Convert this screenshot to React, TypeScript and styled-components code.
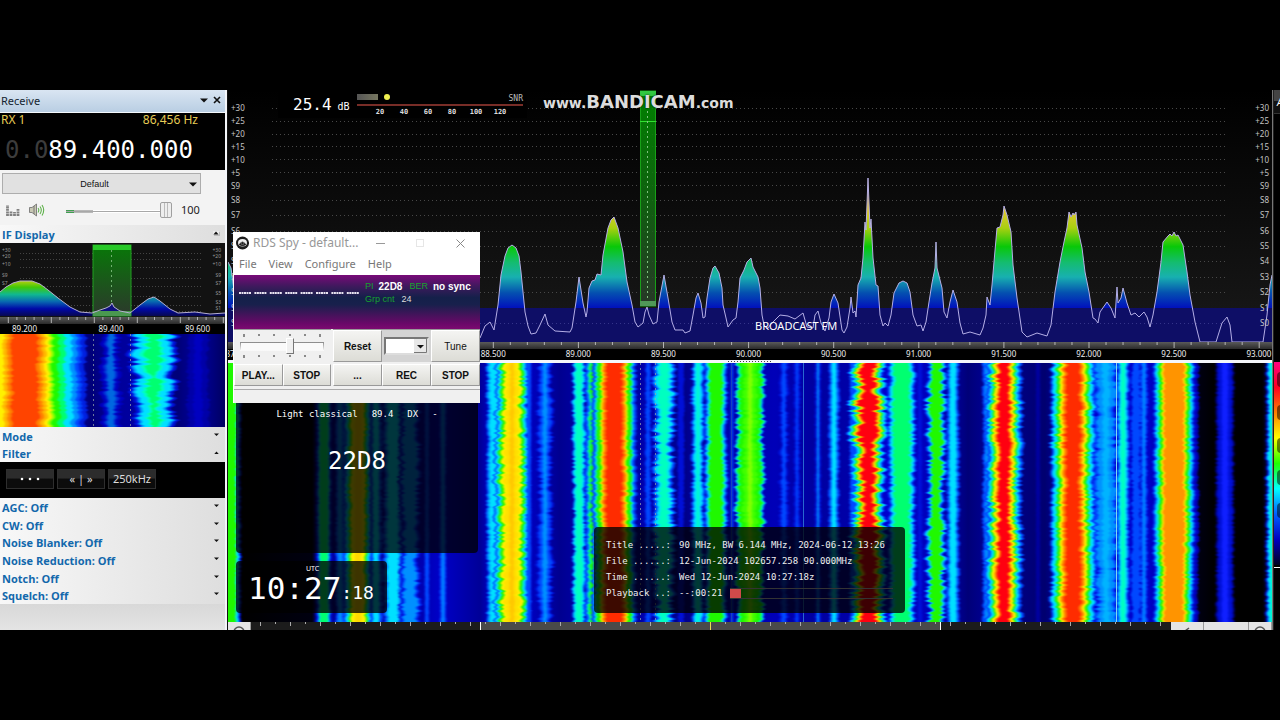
import React from "react";
import styled, { createGlobalStyle } from "styled-components";

const sans = `"Noto Sans", "Open Sans", sans-serif`;
const mono = `"DejaVu Sans Mono", "Liberation Mono", monospace`;
const arial = `"Liberation Sans", Arial, sans-serif`;

const Global = createGlobalStyle`
  * { box-sizing: border-box; }
  body { margin: 0; background: #000; font-family: ${sans}; font-size: 11px; }
  button, input, select { font: inherit; color: inherit; margin: 0; }
  svg { display: block; }
  h1, h2, p, dl, dd, dt { margin: 0; font-weight: inherit; font-size: inherit; }
`;

const Page = styled.div`
  min-height: 100vh;
  display: flex;
  flex-direction: column;
  justify-content: center;
  background: #000;
  overflow: hidden;
`;

const Workspace = styled.main`
  display: grid;
  grid-template-columns: 225px minmax(0, 1fr) 7px;
`;

/* ---------- receiver side panel ---------- */

const Sidebar = styled.aside`
  display: flex;
  flex-direction: column;
  background: linear-gradient(90deg, #f6f6f6, #dcdcdc);
`;

const PanelHeader = styled.header`
  display: flex;
  align-items: center;
  height: 23px;
  padding: 0 3px 2px 1px;
  gap: 2px;
  background: linear-gradient(#d9e5f2, #b9cee3);
  border-bottom: 1px solid #f4f8fc;
  color: #151f30;
  h1 { flex: 1; }
`;

const IconButton = styled.button`
  width: 11px;
  height: 14px;
  padding: 0;
  border: 0;
  background: none;
  display: grid;
  place-items: center;
`;

const Tuner = styled.section`
  height: 57px;
  background: #000;
  color: #e6cc55;
`;

const TunerInfo = styled.div`
  display: flex;
  justify-content: space-between;
  padding: 0 27px 0 1px;
  font-size: 12px;
  line-height: 14px;
`;

const Frequency = styled.div`
  padding-left: 5px;
  margin-top: 7px;
  font: 24px/32px ${mono};
  color: #fff;
  span { color: #3c3c3c; }
`;

const AudioBlock = styled.section`
  display: flex;
  flex-direction: column;
  height: 55px;
  padding: 3px 2px 0;
  background: #f3f3f3;
`;

const DeviceBox = styled.div`
  position: relative;
  width: 199px;
  svg { position: absolute; right: 4px; top: 9px; pointer-events: none; }
`;

const DeviceSelect = styled.select`
  display: block;
  width: 100%;
  height: 21px;
  appearance: none;
  background: #e1e1e1;
  border: 1px solid #adadad;
  padding: 0 14px 0 0;
  font: 9px ${arial};
  color: #111;
  text-align: center;
  text-align-last: center;
`;

const VolumeRow = styled.div`
  display: flex;
  align-items: center;
  gap: 9px;
  height: 36px;
  padding-left: 4px;
  svg { flex: none; }
  output { color: #222; }
`;

const VolumeSlider = styled.input`
  appearance: none;
  width: 108px;
  height: 18px;
  margin-left: 10px;
  background: linear-gradient(90deg, #3f9f50 8px, #b8b8b8 8px 27px, #fff 27px) 2px 9px / 100px 3px no-repeat;
  border: 0;
  &::-webkit-slider-runnable-track {
    height: 16px;
    background: linear-gradient(#a8a8a8, #a8a8a8) 2px 9px / 96% 1px no-repeat;
  }
  &::-webkit-slider-thumb {
    appearance: none;
    width: 12px;
    height: 16px;
    border: 1px solid #a0a0a0;
    border-radius: 2px;
    background: linear-gradient(90deg, #eee 3px, #bbb 3px 4px, #eee 4px 6px, #bbb 6px 7px, #eee 7px);
  }
`;

const SectionButton = styled.button<{ $boxed?: boolean }>`
  display: flex;
  align-items: center;
  justify-content: space-between;
  width: 100%;
  min-height: 17px;
  border: 0;
  padding: 2px 6px 0 2px;
  background: linear-gradient(90deg, #f8f8f8, #dedede);
  color: #1268ac;
  font: bold 11px/16px "Open Sans", ${sans};
  text-align: left;
  svg { background: ${(p) => (p.$boxed ? "#ececec" : "transparent")}; box-shadow: ${(p) => (p.$boxed ? "1px 1px #bbb" : "none")}; margin-bottom: 4px; }
`;

const SectionList = styled.div<{ $rows: number; $height: number }>`
  display: grid;
  grid-template-rows: repeat(${(p) => p.$rows}, minmax(0, 1fr));
  height: ${(p) => p.$height}px;
`;

const SidebarFoot = styled.div`
  flex: 1;
  background: linear-gradient(#d8d8d8, #e4e4e4);
`;

const Scope = styled.section`
  background: #000;
  svg { width: 100%; }
`;

const ScaleRow = styled.div`
  display: flex;
  justify-content: space-between;
  padding: 0 15px 0 12px;
  height: 10px;
  font-size: 8px;
  line-height: 9px;
  color: #eee;
`;

const FilterBar = styled.div`
  display: flex;
  gap: 3px;
  height: 36px;
  padding: 7px 6px;
  background: #000;
`;

const FilterButton = styled.button`
  width: 48px;
  height: 20px;
  padding: 0;
  border: 1px solid #2e2e2e;
  background: linear-gradient(#2c2c2c 45%, #0c0c0c 50%);
  color: #ddd;
  line-height: 16px;
  white-space: nowrap;
`;

/* ---------- main display ---------- */

const Display = styled.section`
  position: relative;
  min-width: 0;
  padding-left: 3px;
  border-right: 1px solid #777;
  background: linear-gradient(90deg, #f4f6fa 2px, #111 2px);
`;

const Spectrum = styled.div`
  position: relative;
  svg.plot { width: 100%; }
`;

const LevelScale = styled.div<{ $side: "left" | "right" }>`
  position: absolute;
  top: 11px;
  bottom: 11px;
  ${(p) => p.$side}: 3px;
  display: grid;
  grid-template-rows: repeat(7, 13px) repeat(9, 1fr);
  align-items: center;
  text-align: ${(p) => p.$side};
  font-size: 8px;
  line-height: 12px;
  color: #c4c4c4;
`;

const Meter = styled.div`
  position: absolute;
  top: 0;
  left: 50px;
  display: flex;
  width: 249px;
  height: 28px;
  background: #000;
  font-family: ${mono};
  color: #fff;
  p { width: 79px; padding: 5px 0 0 15px; font-size: 16px; line-height: 20px; white-space: nowrap; }
  small { font-size: 10px; }
`;

const MeterScale = styled.div`
  flex: 1;
  display: flex;
  flex-direction: column;
  svg { width: 166px; }
`;

const MeterTicks = styled.div`
  display: grid;
  grid-template-columns: repeat(6, 24px);
  padding-left: 11px;
  text-align: center;
  font: bold 7px/10px ${mono};
  color: #ddd;
`;

const SnrLabel = styled.span`
  position: absolute;
  right: 4px;
  top: 3px;
  font-size: 8px;
  line-height: 11px;
  color: #bbb;
`;

const BandLabel = styled.div`
  position: absolute;
  left: 527px;
  bottom: 9px;
  font-size: 11px;
  line-height: 14px;
  color: #fff;
`;

const Watermark = styled.div`
  position: absolute;
  left: 315px;
  top: 3px;
  font: bold 18px/18px "DejaVu Sans", sans-serif;
  color: #dcdcdc;
  text-shadow: 0 0 2px #000;
  white-space: nowrap;
  span { font-size: 14px; }
`;

const Ruler = styled.div`
  height: 7px;
  background: linear-gradient(#5a5a5a, #2a2a2a);
  overflow: hidden;
  svg { width: 100%; }
`;

const AxisLabels = styled.div`
  display: flex;
  justify-content: space-between;
  height: 11px;
  overflow: hidden;
  background: #000;
  font-size: 8px;
  line-height: 9px;
  color: #eee;
  span { width: 34px; flex: none; text-align: center; }
  span:first-child { margin-left: -7px; }
  span:last-child { margin-right: -4px; }
`;

const Splitter = styled.div`
  height: 3px;
  background: #f4f6fa;
  svg { margin: 0 auto 0 500px; }
`;

const WaterfallArea = styled.div`
  position: relative;
  svg { width: 100%; }
`;

const Overlay = styled.div`
  position: absolute;
  background: rgba(0, 0, 0, 0.76);
  border-radius: 4px;
  color: #fff;
  font-family: ${mono};
`;

const StationPanel = styled(Overlay)`
  left: 8px;
  top: 30px;
  width: 242px;
  height: 160px;
  text-align: center;
`;

const StationLine = styled.p`
  display: flex;
  justify-content: center;
  gap: 14px;
  margin-top: 15px;
  font-size: 9px;
  line-height: 13px;
`;

const StationCode = styled.p`
  margin-top: 24px;
  font-size: 24px;
  line-height: 32px;
`;

const ClockPanel = styled(Overlay)`
  left: 8px;
  bottom: 9px;
  width: 151px;
  height: 52px;
  padding-left: 12px;
  p { display: flex; align-items: baseline; font-size: 31px; line-height: 30px; }
  p small { font-size: 18px; }
  span { display: block; padding: 3px 0 0 58px; font-size: 7px; line-height: 9px; font-family: ${sans}; }
`;

const InfoPanel = styled(Overlay)`
  left: 366px;
  bottom: 9px;
  width: 311px;
  padding: 10px 12px 12px;
  dl { display: grid; grid-template-columns: 73px 1fr; font-size: 9px; line-height: 16px; white-space: nowrap; color: #eee; }
  dd { display: flex; align-items: center; gap: 8px; }
`;

const Progress = styled.div`
  flex: 1;
  height: 11px;
  border-top: 1px solid #333;
  border-bottom: 1px solid #333;
  &::before { content: ""; display: block; width: 11px; height: 9px; background: #cf4a4a; }
`;

const BottomRuler = styled.div`
  position: relative;
  display: flex;
  justify-content: space-between;
  height: 8px;
  overflow: hidden;
  background: linear-gradient(90deg, #1c1c1c 252px, #4a4a4a 252px 712px, #1c1c1c 712px);
  svg.ticks { position: absolute; inset: 0; width: 100%; }
`;

const ScrollButton = styled.button<{ $w: number }>`
  position: relative;
  width: ${(p) => p.$w}px;
  height: 14px;
  padding: 0;
  border: 0;
  border-right: 1px solid #999;
  background: #e4e4e4;
  svg { margin: 4px auto 0; }
`;

const Buttons = styled.div`
  display: flex;
`;

/* ---------- right edge ---------- */

const EdgeStrip = styled.aside`
  background: #000;
  border-left: 1px solid #222;
  overflow: hidden;
`;

const EdgeTab = styled.div`
  height: 24px;
  padding: 4px 0 0 3px;
  border-bottom: 1px solid #333;
  background: linear-gradient(#444 50%, #111 50%);
  color: #fff;
  font-size: 10px;
  font-style: italic;
  line-height: 16px;
`;

/* ---------- RDS Spy window ---------- */

const SpyWindow = styled.section`
  position: absolute;
  left: 8px;
  top: 142px;
  width: 247px;
  background: #f0f0f0;
  border-left: 1px solid #fff;
  color: #777;
  z-index: 2;
`;

const TitleBar = styled.header`
  display: flex;
  align-items: center;
  height: 22px;
  padding: 0 0 0 2px;
  background: #fff;
  color: #979797;
  h2 { width: 115px; margin-left: 4px; font-size: 12px; line-height: 20px; white-space: nowrap; }
`;

const WindowButton = styled.button`
  width: 40px;
  height: 20px;
  padding: 0;
  border: 0;
  background: none;
  display: grid;
  place-items: center;
`;

const MenuBar = styled.nav`
  display: flex;
  gap: 12px;
  height: 21px;
  padding: 0 5px 2px;
  background: #fff;
  button { border: 0; padding: 0; background: none; line-height: 16px; }
`;

const RdsPanel = styled.div`
  display: grid;
  grid-template-columns: 131px 1fr;
  height: 54px;
  background: linear-gradient(#780a78, #3c1a5c 22%, #14204a 42%, #18204c 55%, #6a0868 90%, #7c0a70);
  svg { margin: 16px 0 0 5px; }
`;

const RdsText = styled.div`
  padding-top: 5px;
  font: 9px/13px ${arial};
  color: #18a030;
  white-space: nowrap;
  p { display: flex; gap: 5px; }
  b { color: #fff; font-size: 10px; }
  b + span { margin-left: 2px; }
  i { font-style: normal; color: #ddd; margin-left: 2px; }
`;

const Controls = styled.div`
  display: grid;
  grid-template-columns: 97px 1fr;
  gap: 2px;
`;

const ControlGroup = styled.div<{ $cols: number }>`
  display: grid;
  grid-template-columns: repeat(${(p) => p.$cols}, 1fr);
  grid-template-rows: 32px 22px;
  row-gap: 2px;
  border-top: 1px solid #999;
`;

const SpyButton = styled.button<{ $light?: boolean }>`
  padding: 0;
  border: 1px solid;
  border-color: #fff #999 #999 #fff;
  background: linear-gradient(#f4f4f2, #dcdcd6);
  color: #111;
  font: ${(p) => (p.$light ? "normal" : "bold")} 10px ${arial};
`;

const TrackCell = styled.div`
  grid-column: span 2;
  padding: 4px 6px 0;
`;

const TrackSlider = styled.input`
  display: block;
  appearance: none;
  width: 84px;
  height: 17px;
  background: linear-gradient(#888, #fff) 0 4px / 100% 9px no-repeat;
  &::-webkit-slider-runnable-track {
    height: 17px;
    background: linear-gradient(#fafafa, #fafafa) 1px 5px / 82px 7px no-repeat;
  }
  &::-webkit-slider-thumb {
    appearance: none;
    width: 8px;
    height: 16px;
    background: #f0f0f0;
    border: 1px solid;
    border-color: #fff #777 #777 #fff;
  }
`;

const ComboCell = styled.div`
  position: relative;
  display: grid;
  place-items: center;
  background: #d4d4d4;
  svg { position: absolute; right: 4px; top: 9px; pointer-events: none; }
`;

const Combo = styled.select`
  appearance: none;
  width: 45px;
  height: 18px;
  border: 2px solid;
  border-color: #777 #ddd #ddd #777;
  background: #fff;
  border-radius: 0;
`;

const StatusBar = styled.footer`
  height: 14px;
  margin-top: 3px;
  border-top: 1px solid #aaa;
`;

/* ---------- drawing helpers ---------- */

const Arrow = ({ up, size = 8 }: { up?: boolean; size?: number }) => (
  <svg width={size} height={size / 2 + 1} viewBox="0 0 8 5" aria-hidden="true">
    <path d={up ? "M0.5 4.5H7.5L4 0.5Z" : "M0 0.5H8L4 4.5Z"} fill="#111" />
  </svg>
);

type Layer = [number, number, string];
type Band = { x: number; wob: number; layers: Layer[] };

const sym = (x: number, wob: number, ...pairs: [number, string][]): Band => ({
  x, wob, layers: pairs.map(([w, c]) => [w, w, c] as Layer),
});

const random = (seed: number) => {
  let s = (Math.abs(Math.round(seed * 7919)) % 233280) + 1;
  return () => {
    s = (s * 9301 + 49297) % 233280;
    return s / 233280 - 0.5;
  };
};

function bandPaths(band: Band, top: number, bottom: number) {
  const rnd = random(band.x);
  const phase = rnd() * 9;
  const rows: { y: number; l: number; r: number }[] = [];
  for (let y = top; y <= bottom + 2; y += 2) {
    const slow = Math.sin(y / 5 + phase) * 0.16 + Math.sin(y / 23 + phase) * 0.14;
    rows.push({ y, l: (slow + rnd() * 1.3) * band.wob, r: (slow + rnd() * 1.3) * band.wob });
  }
  return band.layers.map(([l, r, color], i) => {
    const left = rows.map((q) => `${(band.x - l - q.l * Math.min(1, l / 6)).toFixed(1)},${q.y}`);
    const right = rows.map((q) => `${(band.x + r + q.r * Math.min(1, r / 6)).toFixed(1)},${q.y}`).reverse();
    return <polygon key={i} points={[...left, ...right].join(" ")} fill={color} />;
  });
}

type WaterfallProps = {
  id: string; x: number; y: number; w: number; h: number;
  base: [number, string][]; bands: Band[]; dashed: number[]; lines?: [number, string][];
};

function Waterfall({ id, x, y, w, h, base, bands, dashed, lines = [] }: WaterfallProps) {
  return (
    <svg height={h} viewBox={`${x} ${y} ${w} ${h}`} preserveAspectRatio="none" role="img" aria-label="Waterfall">
      <defs>
        <linearGradient id={id} gradientUnits="userSpaceOnUse" x1={x} x2={x + w} y1="0" y2="0">
          {base.map(([p, c]) => <stop key={p} offset={(p - x) / w} stopColor={c} />)}
        </linearGradient>
        <filter id={`${id}-mix`} x="-2%" width="104%" y="-2%" height="104%" colorInterpolationFilters="sRGB">
          <feGaussianBlur stdDeviation="1.1 0.5" />
        </filter>
      </defs>
      <rect x={x} y={y} width={w} height={h} fill={`url(#${id})`} />
      <g filter={`url(#${id}-mix)`}>{bands.map((b) => <g key={b.x}>{bandPaths(b, y - 4, y + h + 4)}</g>)}</g>
      {lines.map(([lx, c]) => <line key={lx} x1={lx} x2={lx} y1={y} y2={y + h} stroke={c} strokeWidth="1" />)}
      {dashed.map((dx) => (
        <line key={dx} x1={dx + 0.5} x2={dx + 0.5} y1={y} y2={y + h} stroke="#9aa" strokeDasharray="2 3" opacity="0.7" />
      ))}
    </svg>
  );
}

const B1 = "#0010d8", B2 = "#0048ff", B3 = "#0090ff", CY = "#00e0ff", TQ = "#00ffc0", SG = "#00ff70", GR = "#20f800";
const YE = "#fff000", AM = "#ffb800", OR = "#ff8000", RD = "#ff2c00", CR = "#ff0010";

const mainBands: Band[] = [
  sym(228, 1.5, [13, B1], [11, CY], [8, GR]),
  sym(324, 1, [8, B1], [6, B3], [5, CY], [4, SG]),
  sym(340, 2, [4, B2], [2, B3]),
  sym(347, 2, [3, B3], [1, CY]),
  sym(358, 2, [14, B2], [12, CY], [9, GR], [7, YE], [3, "#ffd800"]),
  sym(376, 2, [6, B2], [3, CY]),
  sym(393, 2, [9, B2], [7, B3], [5, CY]),
  sym(410, 4, [10, B1], [8, B2], [6, B3]),
  sym(427, 1.5, [2, B2]),
  sym(443, 1.5, [3, B2], [1, B3]),
  sym(495, 2, [8, B2], [7, B3], [5, CY]),
  sym(512, 4, [17, B2], [15, CY], [12, GR], [9, YE], [6, "#ffe000"], [2, "#ffc800"]),
  sym(529, 1, [2, B2]),
  sym(545, 4, [7, B1], [5, B2], [2, B3]),
  sym(579, 3, [6, B2], [5, CY], [3, TQ]),
  sym(599, 2, [14, B2], [11, CY], [10, SG], [8, GR]),
  sym(614, 2.4, [22, B2], [19, CY], [17, GR], [13, YE], [11, OR], [8, RD]),
  sym(648, 3, [3, B1], [2, B2]),
  sym(664, 5, [10, B2], [7, CY], [4, TQ]),
  sym(681, 2, [3, B1]),
  sym(698, 3, [6, B2], [4, CY], [1, TQ]),
  sym(716, 2.4, [11, B2], [9, CY], [7, SG], [6, GR]),
  sym(732, 1, [1, B2]),
  sym(750, 4, [14, B2], [13, CY], [12, SG], [10, GR], [6, "#40ff00"], [2, "#80ff00"]),
  sym(784, 4, [4, B1], [2, B2]),
  sym(797, 3, [3, B1], [1, B2]),
  sym(818, 2, [3, B1], [1, B3]),
  sym(834, 2, [5, B2], [3, B3], [2, CY]),
  sym(853, 2, [3, B2]),
  sym(868, 6, [17, B2], [15, CY], [12, GR], [10, YE], [8, OR], [6, CR]),
  sym(902, 3, [13, B2], [11, CY], [8, SG]),
  sym(920, 2, [2, B1]),
  sym(936, 5, [9, B2], [7, CY], [5, GR]),
  sym(953, 2, [6, B2], [4, B3], [3, CY]),
  sym(988, 2, [5, B2], [3, B3]),
  sym(1004, 4, [18, B2], [15, CY], [12, GR], [10, YE], [7, OR], [5, CR]),
  sym(1038, 1, [2, "#0000a0"]),
  sym(1073, 3.4, [22, B2], [20, CY], [16, GR], [13, YE], [10, OR], [7, RD]),
  sym(1106, 5, [11, B2], [8, B3], [3, "#00b4ff"]),
  sym(1123, 2, [6, B2], [4, CY], [2, TQ]),
  sym(1136, 3, [4, B2]),
  sym(1144, 3, [3, B2], [1, B3]),
  sym(1174, 2.4, [24, "#0000c0"], [20, B2], [18, CY], [15, GR], [12, YE], [10, "#ff9400"]),
  sym(1225, 1.5, [9, "#000088"], [7, B1], [3, "#1020ff"]),
  sym(1274, 2, [8, B1], [6, CY], [3, TQ]),
];

const mainBase: [number, string][] = [
  [228, "#000090"], [238, "#000080"], [242, "#000000"], [312, "#000010"], [318, "#0000a0"], [420, "#0000b0"],
  [440, "#0000c8"], [480, "#000098"], [490, "#0000c0"], [530, "#0000c0"], [560, "#000090"], [590, "#0000b0"],
  [635, "#0000a0"], [648, "#0000b0"], [685, "#000088"], [700, "#0000a8"], [740, "#0000b0"], [775, "#0000b8"],
  [812, "#0000a0"], [850, "#0000a8"], [888, "#0000d0"], [920, "#0000c0"], [945, "#0000b0"], [968, "#000078"],
  [984, "#000090"], [1020, "#000080"], [1045, "#000070"], [1060, "#0000a0"], [1090, "#0000d0"], [1150, "#0000c8"],
  [1190, "#000090"], [1200, "#000010"], [1214, "#000000"], [1236, "#000000"], [1262, "#000000"], [1272, "#000060"],
];

const ifBands: Band[] = [
  { x: 25, wob: 3, layers: [[40, 61, "#0020e0"], [40, 56, B2], [40, 52, B3], [40, 47, CY], [40, 40, SG], [40, 34, GR], [40, 28, "#90ff00"], [40, 25, YE], [21, 21, AM], [17, 17, OR], [13, 13, "#ff4400"]] },
  sym(111, 5, [9, "#0000c0"], [5, "#0030d8"], [3, "#0068e0"]),
  sym(154, 8, [22, B1], [18, B3], [15, CY], [8, TQ], [5, SG]),
  sym(198, 3, [10, "#0000a8"], [4, "#0000c0"]),
];

const specPoints =
  "228,262 231,268 234,290 238,325 250,338 300,338 480,338 485,326 490,322 494,330 498,305 501,275 505,256 508,248 512,245 516,248 519,256 521,272 525,312 528,326 531,334 536,333 540,325 545,314 548,325 555,331 570,332 572,328 576,302 579,277 583,303 586,317 587,312 589,288 592,281 595,280 597,274 601,275 603,255 608,228 611,220 614,217 618,228 623,252 627,282 632,305 635,322 638,327 643,323 645,312 647,307 649,315 653,324 657,322 659,302 664,275 668,298 672,322 675,330 683,330 685,333 690,331 693,315 696,298 698,293 701,303 703,318 705,317 707,298 710,278 713,268 715,266 719,273 722,288 723,305 726,318 728,327 733,320 736,318 738,302 740,278 744,270 747,262 751,258 753,267 758,277 760,288 762,315 764,325 767,329 772,323 780,315 788,316 795,319 803,313 807,327 813,328 815,315 818,311 821,323 825,331 829,318 831,302 834,294 838,303 842,330 844,333 847,327 850,308 851,297 853,313 855,311 856,317 858,285 861,278 863,258 865,222 866,230 868,178 870,228 871,219 873,258 876,285 878,286 880,315 883,326 885,323 888,326 891,315 894,293 899,283 903,281 907,283 910,292 913,315 917,326 921,325 923,331 926,322 929,302 932,283 935,268 936,242 937,268 942,288 944,312 947,318 950,302 953,290 957,302 960,323 963,334 970,332 980,335 983,328 986,315 987,297 990,305 992,285 994,262 997,228 1000,227 1003,215 1004,206 1007,215 1011,232 1013,265 1017,298 1022,332 1027,337 1037,333 1047,336 1051,325 1055,292 1060,262 1064,242 1067,228 1069,212 1071,217 1073,213 1074,215 1076,212 1077,225 1082,248 1085,272 1089,292 1093,318 1095,319 1098,323 1100,312 1107,302 1111,308 1115,318 1117,287 1118,303 1121,298 1123,288 1127,303 1131,315 1135,313 1139,317 1144,312 1147,317 1150,327 1153,315 1157,292 1161,262 1163,242 1168,236 1170,234 1172,236 1174,232 1176,236 1178,235 1183,245 1187,272 1190,295 1195,322 1200,342 1216,342 1222,323 1227,317 1230,325 1232,342 1263,342 1267,315 1270,285 1272,275";

const ifPoints =
  "0,292 6,287 13,283 20,281 26,281 32,281 40,284 48,290 58,298 70,307 80,312 92,313 100,310 106,308 110,306 112,303 114,307 120,311 130,313 140,305 148,299 154,297 160,301 170,309 178,313 195,312 210,314 225,313";

const gridRows = [108, 121, 134, 146, 159, 172, 185, 200, 215, 231, 246, 261, 277, 292, 308, 323];
const levels = ["+30", "+25", "+20", "+15", "+10", "+5", "S9", "S8", "S7", "S6", "S5", "S4", "S3", "S2", "S1", "S0"];
const freqs = ["87.000", "87.500", "88.000", "88.500", "89.000", "89.500", "90.000", "90.500", "91.000", "91.500", "92.000", "92.500", "93.000"];

function SpectrumPlot() {
  return (
    <svg className="plot" height="252" viewBox="228 90 1044 252" preserveAspectRatio="none" role="img" aria-label="RF spectrum">
      <defs>
        <linearGradient id="bg" x1="0" x2="0" y1="0" y2="1">
          <stop offset="0" stopColor="#000" /><stop offset="1" stopColor="#191919" />
        </linearGradient>
        <linearGradient id="heat" gradientUnits="userSpaceOnUse" x1="0" x2="0" y1="178" y2="310">
          <stop offset="0" stopColor="#d89060" /><stop offset="0.25" stopColor="#e0c830" /><stop offset="0.38" stopColor="#a8d010" />
          <stop offset="0.52" stopColor="#08c808" /><stop offset="0.64" stopColor="#14bc70" /><stop offset="0.75" stopColor="#18b0b0" />
          <stop offset="0.87" stopColor="#0450b0" /><stop offset="1" stopColor="#0008c0" />
        </linearGradient>
        <linearGradient id="tune" x1="0" x2="0" y1="0" y2="1">
          <stop offset="0" stopColor="#009000" stopOpacity="0.9" /><stop offset="0.5" stopColor="#107010" stopOpacity="0.85" />
          <stop offset="1" stopColor="#2c402c" stopOpacity="0.8" />
        </linearGradient>
      </defs>
      <rect x="228" y="90" width="1044" height="252" fill="url(#bg)" />
      {gridRows.map((y) => (
        <line key={y} x1="272" x2="1228" y1={y + 0.5} y2={y + 0.5} stroke="#484848" strokeDasharray="1 3" />
      ))}
      <polygon points={`228,342 ${specPoints} 1272,342`} fill="url(#heat)" />
      <rect x="228" y="308" width="1044" height="34" fill="#0e0e66" />
      <line x1="272" x2="1228" y1="323.5" y2="323.5" stroke="#34348a" strokeDasharray="1 3" />
      <rect x="640.5" y="91" width="15" height="215" fill="url(#tune)" stroke="#18a018" />
      <rect x="640" y="91" width="16" height="5" fill="#30c840" />
      <line x1="640" x2="656" y1="121.5" y2="121.5" stroke="#30e030" />
      <line x1="647.5" x2="647.5" y1="96" y2="302" stroke="#80c080" strokeDasharray="2 3" />
      <rect x="640" y="301" width="16" height="5" fill="#509858" />
      <polyline points={specPoints} fill="none" stroke="#b4aee6" strokeWidth="1" />
    </svg>
  );
}

function Ticks({ x, w, step, offset, h, major }: { x: number; w: number; step: number; offset: number; h: number; major: number }) {
  const marks: number[] = [];
  for (let i = 0; offset + i * step < x + w; i++) marks.push(i);
  return (
    <svg className="ticks" height={h} viewBox={`${x} 0 ${w} ${h}`} preserveAspectRatio="none" aria-hidden="true">
      {marks.map((i) => (
        <line key={i} x1={offset + i * step} x2={offset + i * step} y1="0" y2={i % major ? 3 : 6} stroke="#b4b4b4" />
      ))}
    </svg>
  );
}

function IfScope() {
  const ys = [250, 256, 264, 275, 283, 293, 302, 308];
  const names = ["+30", "+20", "+10", "S9", "S7", "S5", "S3", "S1"];
  return (
    <svg height="74" viewBox="0 243 225 74" preserveAspectRatio="none" role="img" aria-label="IF spectrum">
      <defs>
        <linearGradient id="ifheat" gradientUnits="userSpaceOnUse" x1="0" x2="0" y1="280" y2="316">
          <stop offset="0" stopColor="#c8d010" /><stop offset="0.2" stopColor="#40c808" /><stop offset="0.4" stopColor="#10b890" />
          <stop offset="0.6" stopColor="#0868b0" /><stop offset="0.8" stopColor="#0008a8" /><stop offset="1" stopColor="#080850" />
        </linearGradient>
        <linearGradient id="iftune" x1="0" x2="0" y1="0" y2="1">
          <stop offset="0" stopColor="#087808" /><stop offset="1" stopColor="#2c382c" />
        </linearGradient>
      </defs>
      <rect y="243" width="225" height="74" fill="#121212" />
      {ys.map((y, i) => (
        <g key={y} fill="#999" fontSize="5" fontFamily="Noto Sans, sans-serif">
          <line x1="20" x2="202" y1={y + 3.5} y2={y + 3.5} stroke="#444" strokeDasharray="1 2" />
          <text x="2" y={y + 2}>{names[i]}</text>
          <text x="221" y={y + 2} textAnchor="end">{names[i]}</text>
        </g>
      ))}
      <polygon points={`0,316 ${ifPoints} 225,316`} fill="url(#ifheat)" />
      <rect x="93" y="245" width="38" height="71" fill="url(#iftune)" stroke="#20a020" />
      <rect x="93" y="245" width="38" height="5" fill="#28c828" />
      <line x1="111.5" x2="111.5" y1="250" y2="304" stroke="#70b070" strokeDasharray="2 3" />
      <polygon points="100,311 106,308 110,306 112,303 114,307 120,311" fill="#101080" />
      <rect x="93" y="311" width="38" height="5" fill="#4a9850" />
      <polyline points={ifPoints} fill="none" stroke="#b4aed0" />
    </svg>
  );
}

function RdsSpy() {
  return (
    <SpyWindow aria-label="RDS Spy">
      <TitleBar>
        <svg width="14" height="14" viewBox="0 0 14 14" aria-hidden="true">
          <circle cx="7" cy="7" r="7" fill="#1c1c1c" />
          <ellipse cx="7" cy="6.8" rx="4.8" ry="4" fill="#eee" />
          <path d="M3 8.500Q7 3 11 8.500Q7 12 3 8.500Z" fill="#1c1c1c" />
          <circle cx="7" cy="7.200" r="1.600" fill="#1c1c1c" stroke="#aaa" strokeWidth=".6" />
        </svg>
        <h2>RDS Spy - default...</h2>
        <Buttons>
          <WindowButton aria-label="Minimize"><svg width="9" height="9"><path d="M0 4.500H9" stroke="#999" /></svg></WindowButton>
          <WindowButton aria-label="Maximize"><svg width="9" height="9"><rect x=".5" y=".5" width="7" height="7" fill="none" stroke="#e6e6e6" /></svg></WindowButton>
          <WindowButton aria-label="Close"><svg width="9" height="9"><path d="M0.500 0.500L8.500 8.500M8.500 0.500L0.500 8.500" stroke="#888" /></svg></WindowButton>
        </Buttons>
      </TitleBar>
      <MenuBar>
        <button>File</button><button>View</button><button>Configure</button><button>Help</button>
      </MenuBar>
      <RdsPanel>
        <svg width="122" height="6" aria-hidden="true">
          {[0, 1, 2, 3, 4, 5, 6, 7].map((i) => (
            <path key={i} d={`M${i * 15.4} 2H${i * 15.4 + 12}`} stroke="#e8e4f0" strokeWidth="2" strokeDasharray="2 0.5" />
          ))}
        </svg>
        <RdsText>
          <p><span>PI</span><b>22D8</b><span>BER</span><b>no sync</b></p>
          <p><span>Grp cnt</span><i>24</i></p>
        </RdsText>
      </RdsPanel>
      <Controls>
        <ControlGroup $cols={2}>
          <TrackCell>
            <svg width="84" height="4" aria-hidden="true"><path d="M4 0V3M19 0V2M34 0V2M50 0V2M65 0V2M80 0V3" stroke="#222" /></svg>
            <TrackSlider type="range" min="0" max="10" defaultValue="6" aria-label="Position" />
            <svg width="84" height="4" aria-hidden="true"><path d="M4 0V3M19 0V2M34 0V2M50 0V2M65 0V2M80 0V3" stroke="#222" /></svg>
          </TrackCell>
          <SpyButton>PLAY...</SpyButton><SpyButton>STOP</SpyButton>
        </ControlGroup>
        <ControlGroup $cols={3}>
          <SpyButton>Reset</SpyButton>
          <ComboCell>
            <Combo aria-label="Frequency"><option></option></Combo>
            <svg width="13" height="14" aria-hidden="true"><rect width="13" height="14" fill="#e8e8e8" /><path d="M0 13.500H12.500V0" fill="none" stroke="#777" /><path d="M3 6H10L6.500 9.500Z" fill="#111" /></svg>
          </ComboCell>
          <SpyButton $light>Tune</SpyButton>
          <SpyButton>...</SpyButton><SpyButton>REC</SpyButton><SpyButton>STOP</SpyButton>
        </ControlGroup>
      </Controls>
      <StatusBar />
    </SpyWindow>
  );
}

function ReceiverPanel() {
  return (
    <Sidebar>
      <PanelHeader>
        <h1>Receive</h1>
        <IconButton aria-label="Options"><Arrow /></IconButton>
        <IconButton aria-label="Close panel">
          <svg width="8" height="8" viewBox="0 0 8 8"><path d="M1 1L7 7M7 1L1 7" stroke="#111" strokeWidth="1.600" /></svg>
        </IconButton>
      </PanelHeader>
      <Tuner>
        <TunerInfo><span>RX 1</span><span>86,456 Hz</span></TunerInfo>
        <Frequency><span>0.0</span>89.400.000</Frequency>
      </Tuner>
      <AudioBlock>
        <DeviceBox>
          <DeviceSelect aria-label="Audio device"><option>Default</option></DeviceSelect>
          <Arrow />
        </DeviceBox>
        <VolumeRow>
          <svg width="14" height="12" viewBox="0 0 14 12" aria-hidden="true">
            <path d="M1.500 12V1M5 12V7M8.500 12V8M12 12V5" stroke="#808080" strokeWidth="2.800" strokeDasharray="2 .6" />
          </svg>
          <svg width="16" height="14" viewBox="0 0 16 14" aria-hidden="true">
            <path d="M0.500 4.500H3L7.500 1V13L3 9.500H0.500Z" fill="#c8c8b4" stroke="#777" strokeWidth=".9" />
            <path d="M5 3V11" stroke="#666" strokeWidth=".8" />
            <path d="M9 5q1.600 2 0 4.500M11 3.500q2.600 3.500 0 7.500M13 2q3.400 5 0 10.500" fill="none" stroke="#5cb048" strokeWidth="1.100" />
          </svg>
          <VolumeSlider type="range" min="0" max="100" defaultValue="100" aria-label="Volume" />
          <output>100</output>
        </VolumeRow>
      </AudioBlock>
      <SectionButton $boxed>IF Display<Arrow up size={6} /></SectionButton>
      <Scope>
        <IfScope />
        <Ruler><Ticks x={0} w={225} step={8.6} offset={8.3} h={7} major={5} /></Ruler>
        <ScaleRow><span>89.200</span><span>89.400</span><span>89.600</span></ScaleRow>
        <Waterfall
          id="wf-if" x={0} y={335} w={225} h={93} bands={ifBands} dashed={[93, 130]}
          base={[[0, YE], [60, "#0000d0"], [90, "#000078"], [111, "#000098"], [135, "#0000a0"], [178, "#000078"], [198, "#0000a0"], [225, "#000060"]]}
        />
      </Scope>
      <SectionList $rows={2} $height={35}>
        <SectionButton>Mode<Arrow size={5} /></SectionButton>
        <SectionButton>Filter<Arrow up size={5} /></SectionButton>
      </SectionList>
      <FilterBar>
        <FilterButton aria-label="More filters">
          <svg width="46" height="16" viewBox="0 0 46 16"><g fill="#fff"><circle cx="15" cy="8" r="1.300" /><circle cx="23" cy="8" r="1.300" /><circle cx="31" cy="8" r="1.300" /></g></svg>
        </FilterButton>
        <FilterButton>« | »</FilterButton>
        <FilterButton>250kHz</FilterButton>
      </FilterBar>
      <SectionList $rows={6} $height={106}>
        {["AGC: Off", "CW: Off", "Noise Blanker: Off", "Noise Reduction: Off", "Notch: Off", "Squelch: Off"].map((t) => (
          <SectionButton key={t}>{t}<Arrow size={5} /></SectionButton>
        ))}
      </SectionList>
      <SidebarFoot />
    </Sidebar>
  );
}

export default function App() {
  return (
    <Page>
      <Global />
      <Workspace>
        <ReceiverPanel />
        <Display>
          <Spectrum>
            <SpectrumPlot />
            <LevelScale $side="left">{levels.map((l) => <span key={l}>{l}</span>)}</LevelScale>
            <LevelScale $side="right">{levels.map((l) => <span key={l}>{l}</span>)}</LevelScale>
            <Meter>
              <p>25.4<small> dB</small></p>
              <MeterScale>
                <svg height="17" viewBox="0 0 166 17" aria-hidden="true">
                  <defs><linearGradient id="snr"><stop offset="0" stopColor="#555" /><stop offset="1" stopColor="#777760" /></linearGradient></defs>
                  <rect y="4" width="21" height="6" fill="url(#snr)" />
                  <circle cx="30" cy="7" r="3" fill="#f0f050" />
                  <path d="M0 15H166" stroke="#a03c34" strokeWidth="1.500" />
                </svg>
                <MeterTicks>{[20, 40, 60, 80, 100, 120].map((n) => <span key={n}>{n}</span>)}</MeterTicks>
              </MeterScale>
              <SnrLabel>SNR</SnrLabel>
            </Meter>
            <Watermark><span>www.</span>BANDICAM<span>.com</span></Watermark>
            <BandLabel>BROADCAST FM</BandLabel>
          </Spectrum>
          <Ruler><Ticks x={228} w={1044} step={17.02} offset={238} h={7} major={5} /></Ruler>
          <AxisLabels>{freqs.map((f) => <span key={f}>{f}</span>)}</AxisLabels>
          <Splitter><svg width="44" height="3" aria-hidden="true"><path d="M0 1.500H44" stroke="#444" strokeDasharray="1 2" /></svg></Splitter>
          <WaterfallArea>
            <Waterfall
              id="wf-main" x={228} y={363} w={1044} h={259} bands={mainBands} base={mainBase} dashed={[640, 655]}
              lines={[[731.5, "#1840c0"], [803.5, "#2868d0"], [1116.5, "#80d8f0"]]}
            />
            <StationPanel>
              <StationLine><span>Light classical</span><span>89.4</span><span>DX</span><span>-</span></StationLine>
              <StationCode>22D8</StationCode>
            </StationPanel>
            <ClockPanel><span>UTC</span><p>10:27<small>:18</small></p></ClockPanel>
            <InfoPanel>
              <dl>
                <dt>Title .....:</dt><dd>90 MHz, BW 6.144 MHz, 2024-06-12 13:26</dd>
                <dt>File ......:</dt><dd>12-Jun-2024 102657.258 90.000MHz</dd>
                <dt>Time ......:</dt><dd>Wed 12-Jun-2024 10:27:18z</dd>
                <dt>Playback ..:</dt><dd>--:00:21<Progress /></dd>
              </dl>
            </InfoPanel>
          </WaterfallArea>
          <BottomRuler>
            <svg className="ticks" height="8" viewBox="228 0 1044 8" preserveAspectRatio="none" aria-hidden="true">
              {Array.from({ length: 62 }, (_, i) => 260 + i * 15).map((x) => <path key={x} d={`M${x}.500 0V${x % 2 ? 2 : 4}`} stroke="#aaa" />)}
              <path d="M480.500 0V8M940.500 0V8" stroke="#fff" /><path d="M710.500 0V8" stroke="#e8e050" />
            </svg>
            <ScrollButton $w={23} aria-label="Zoom out"><svg width="12" height="12"><circle cx="6" cy="6" r="5" fill="none" stroke="#555" strokeWidth="1.500" /></svg></ScrollButton>
            <Buttons>
              <ScrollButton $w={33} aria-label="Scroll left"><svg width="8" height="8"><path d="M6 1L2 4L6 7" fill="none" stroke="#555" strokeWidth="1.500" /></svg></ScrollButton>
              <ScrollButton $w={45} aria-label="Scroll thumb" />
              <ScrollButton $w={23} aria-label="Zoom in"><svg width="12" height="12"><circle cx="6" cy="6" r="5" fill="none" stroke="#555" strokeWidth="1.500" /></svg></ScrollButton>
            </Buttons>
          </BottomRuler>
          <RdsSpy />
        </Display>
        <EdgeStrip>
          <EdgeTab>A</EdgeTab>
          <svg width="8" height="516" viewBox="0 114 8 516" aria-hidden="true">
            <defs>
              <linearGradient id="pal" x1="0" x2="0" y1="0" y2="1">
                {["#ff0080", "#ff0020", "#ff8000", "#ffff00", "#20ff00", "#00ffff", "#0060ff", "#0000c0", "#000020"].map((c, i) => <stop key={c} offset={i / 8} stopColor={c} />)}
              </linearGradient>
            </defs>
            <rect y="362" width="8" height="203" fill="url(#pal)" />
            {[380, 413, 446, 478, 511].map((y) => <rect key={y} x="3" y={y - 8} width="10" height="15" rx="4" fill="#000" opacity=".5" />)}
            <path d="M0 567.500H8" stroke="#fff" />
          </svg>
        </EdgeStrip>
      </Workspace>
    </Page>
  );
}
